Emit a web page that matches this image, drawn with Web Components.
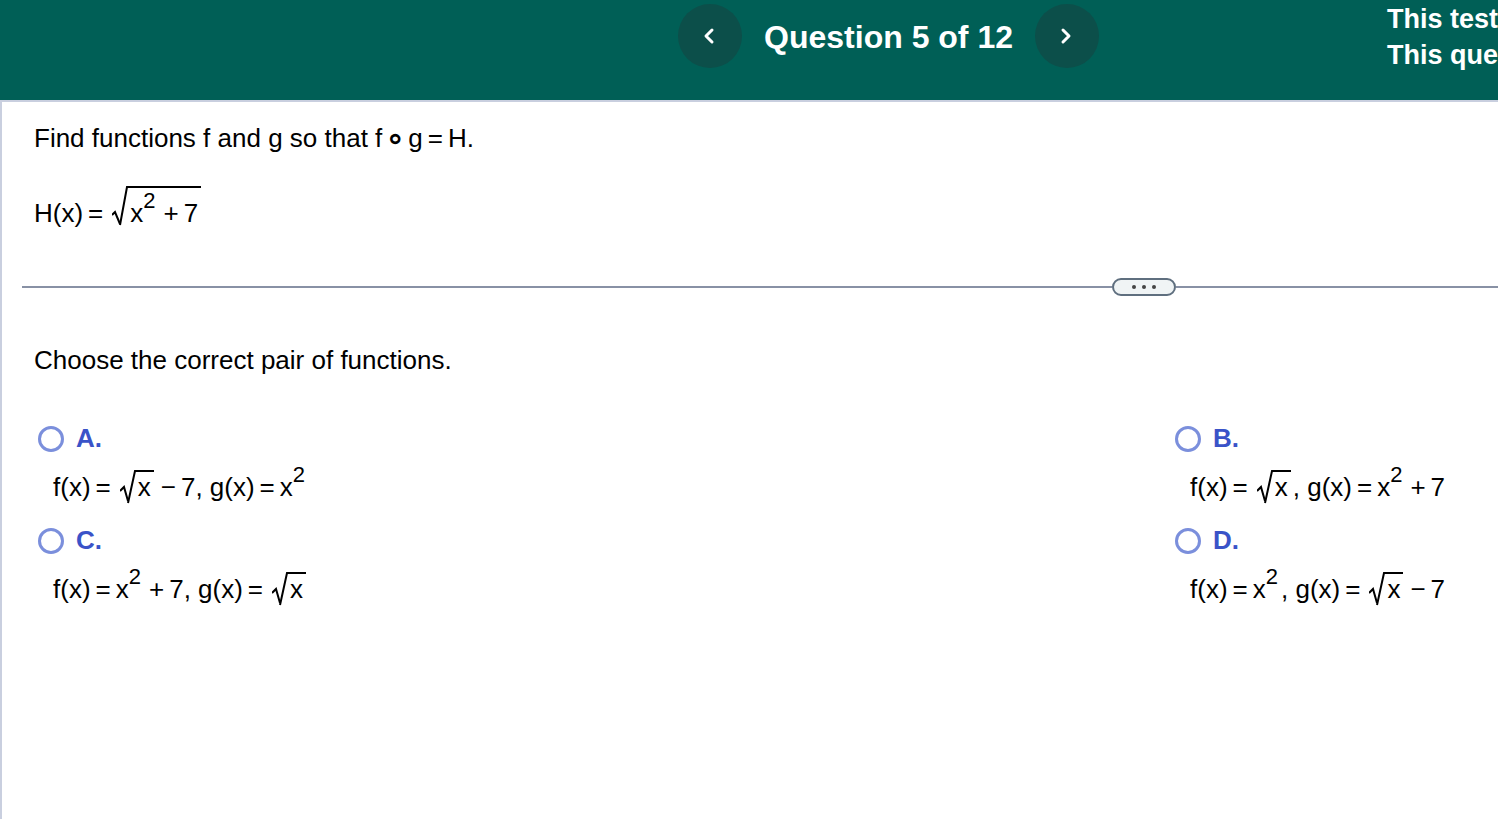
<!DOCTYPE html>
<html lang="en">
<head>
<meta charset="utf-8">
<meta name="viewport" content="width=device-width, initial-scale=1">
<title>Question 5 of 12</title>
<style>
  body { margin: 0; background: #fff; color: #000; font: 26px/30px "Liberation Sans", Arial, sans-serif; }
</style>
</head>
<body>
<quiz-page>
  <quiz-header slot="header" heading="Question 5 of 12">
    <div slot="status">This test</div>
    <div slot="status">This que</div>
  </quiz-header>
  <quiz-prompt>
    <math-line>Find functions f and g so that f<math-op kind="compose">∘</math-op>g<math-op>=</math-op>H.</math-line>
    <math-line>H(x)<math-op>=</math-op><math-root tall>x<math-sup>2</math-sup><math-op>+</math-op>7</math-root></math-line>
  </quiz-prompt>
  <panel-divider></panel-divider>
  <answer-group legend="Choose the correct pair of functions.">
    <answer-choice letter="A">f(x)<math-op>=</math-op><math-root>x</math-root><math-op>−</math-op>7, g(x)<math-op>=</math-op>x<math-sup>2</math-sup></answer-choice>
    <answer-choice letter="B">f(x)<math-op>=</math-op><math-root>x</math-root>, g(x)<math-op>=</math-op>x<math-sup>2</math-sup><math-op>+</math-op>7</answer-choice>
    <answer-choice letter="C">f(x)<math-op>=</math-op>x<math-sup>2</math-sup><math-op>+</math-op>7, g(x)<math-op>=</math-op><math-root>x</math-root></answer-choice>
    <answer-choice letter="D">f(x)<math-op>=</math-op>x<math-sup>2</math-sup>, g(x)<math-op>=</math-op><math-root>x</math-root><math-op>−</math-op>7</answer-choice>
  </answer-group>
</quiz-page>
<script>
  const define = (name, render, setup) => customElements.define(name, class extends HTMLElement {
    connectedCallback() {
      if (this.shadowRoot) return;
      this.attachShadow({ mode: "open" }).innerHTML = render(this);
      if (setup) setup(this);
    }
  });

  define("quiz-page", () => `
    <style>
      :host { display: flex; flex-direction: column; min-height: 100vh; overflow-x: hidden; }
      main { flex: 1; border-top: 2px solid #c9cfdf; border-left: 2px solid #c9cfdf; }
    </style>
    <slot name="header"></slot>
    <main><slot></slot></main>`);

  define("quiz-header", el => `
    <style>
      :host { display: grid; grid-template-columns: 1fr 399px; height: 100px; background: #005f56; color: #fff; font-weight: bold; }
      nav { display: flex; align-items: center; justify-content: flex-end; gap: 22px; height: 64px; margin-top: 4px; }
      h1 { margin: 0; padding-top: 2px; font-size: 32px; line-height: 36px; white-space: nowrap; }
      button { width: 64px; height: 64px; padding: 0; border: 0; border-radius: 50%; background: #0c4f4a; color: inherit; display: grid; place-items: center; }
      svg { display: block; }
      aside { padding: 1px 0 0 288px; font-size: 27px; line-height: 36px; white-space: nowrap; overflow: hidden; }
    </style>
    <nav aria-label="Questions">
      <button type="button" aria-label="Previous question"><svg width="16" height="20" viewBox="0 0 16 20" fill="none" stroke="currentColor" stroke-width="3" stroke-linecap="round" stroke-linejoin="round"><path d="M10 4 4 10l6 6"/></svg></button>
      <h1>${el.getAttribute("heading")}</h1>
      <button type="button" aria-label="Next question"><svg width="16" height="20" viewBox="0 0 16 20" fill="none" stroke="currentColor" stroke-width="3" stroke-linecap="round" stroke-linejoin="round"><path d="m4 4 6 6-6 6"/></svg></button>
    </nav>
    <aside><slot name="status"></slot></aside>`);

  define("quiz-prompt", () => `
    <style>:host { display: flex; flex-direction: column; align-items: flex-start; gap: 33px; padding: 21px 32px 0; }</style>
    <slot></slot>`);

  define("math-line", () => `
    <style>:host { display: flex; align-items: baseline; white-space: nowrap; }</style>
    <slot></slot>`);

  define("math-op", () => `
    <style>
      :host { display: block; margin: 0 5px; }
      :host([kind="compose"]) { align-self: flex-start; margin: 0 3px; font: bold 32px/30px "DejaVu Sans", sans-serif; }
    </style>
    <slot></slot>`);

  define("math-sup", () => `
    <style>
      :host { display: block; margin-right: 3px; line-height: 22px; }
      span { font-size: 22px; vertical-align: 14px; }
    </style>
    <span><slot></slot></span>`);

  define("math-root", el => {
    const tall = el.hasAttribute("tall");
    const h = tall ? 40 : 34;
    return `
    <style>
      :host { display: flex; align-items: baseline; margin: 0 2px 0 4px; }
      svg { display: block; flex: none; align-self: flex-start; }
      span { display: flex; align-items: baseline; border-top: 2px solid; padding: 0 3px 0 2px; }
      :host([tall]) span { padding-top: 2px; }
    </style>
    <svg width="16" height="${h}" viewBox="0 0 16 ${h}" fill="none" stroke="currentColor" aria-hidden="true">
      <path d="${tall ? "M0 29 3 26 8 38" : "M0 21 4 17 8 31"}" stroke-width="2"/>
      <path d="${tall ? "M8 39 15 1H16" : "M8 33 15 1H16"}" stroke-width="2"/>
    </svg><span><slot></slot></span>`;
  });

  define("panel-divider", () => `
    <style>
      :host { display: flex; align-items: center; margin: 50px 0 0 20px; }
      i { height: 2px; background: #8891a5; flex: 1; }
      i:last-child { flex: 0 0 322px; }
      button { box-sizing: border-box; width: 64px; height: 18px; padding: 0; border: 2px solid #5f6f7f; border-radius: 9px; background: #f0f4f5; display: flex; align-items: center; justify-content: center; gap: 6px; }
      b { width: 4px; height: 4px; border-radius: 50%; background: #444; }
    </style>
    <i></i><button type="button" aria-label="Resize panels"><b></b><b></b><b></b></button><i></i>`);

  define("answer-group", el => `
    <style>
      fieldset { margin: 0; border: 0; padding: 49px 0 0 32px; min-width: 0; }
      legend { float: left; width: 100%; padding: 0; }
      div { clear: both; display: grid; grid-template-columns: 1fr 327px; row-gap: 4px; padding-top: 48px; }
    </style>
    <fieldset><legend>${el.getAttribute("legend")}</legend><div role="radiogroup"><slot></slot></div></fieldset>`);

  define("answer-choice", el => `
    <style>
      :host { display: block; padding-left: 4px; }
      label { display: flex; align-items: center; gap: 12px; color: #3a53c8; font-weight: bold; width: fit-content; }
      input { appearance: none; box-sizing: border-box; width: 26px; height: 26px; margin: 2px 0 0; border: 3px solid #7b8fdc; border-radius: 50%; background: #fff; }
      input:checked { background: radial-gradient(#3a53c8 40%, #fff 45%); }
      p { display: flex; align-items: baseline; margin: 11px 0 0 15px; height: 57px; white-space: nowrap; }
    </style>
    <label><input type="radio" name="answer" value="${el.getAttribute("letter")}">${el.getAttribute("letter")}.</label>
    <p><slot></slot></p>`,
    el => el.shadowRoot.querySelector("input").addEventListener("change", () => {
      for (const other of el.parentElement.children)
        if (other !== el) other.shadowRoot.querySelector("input").checked = false;
    }));
</script>
</body>
</html>
